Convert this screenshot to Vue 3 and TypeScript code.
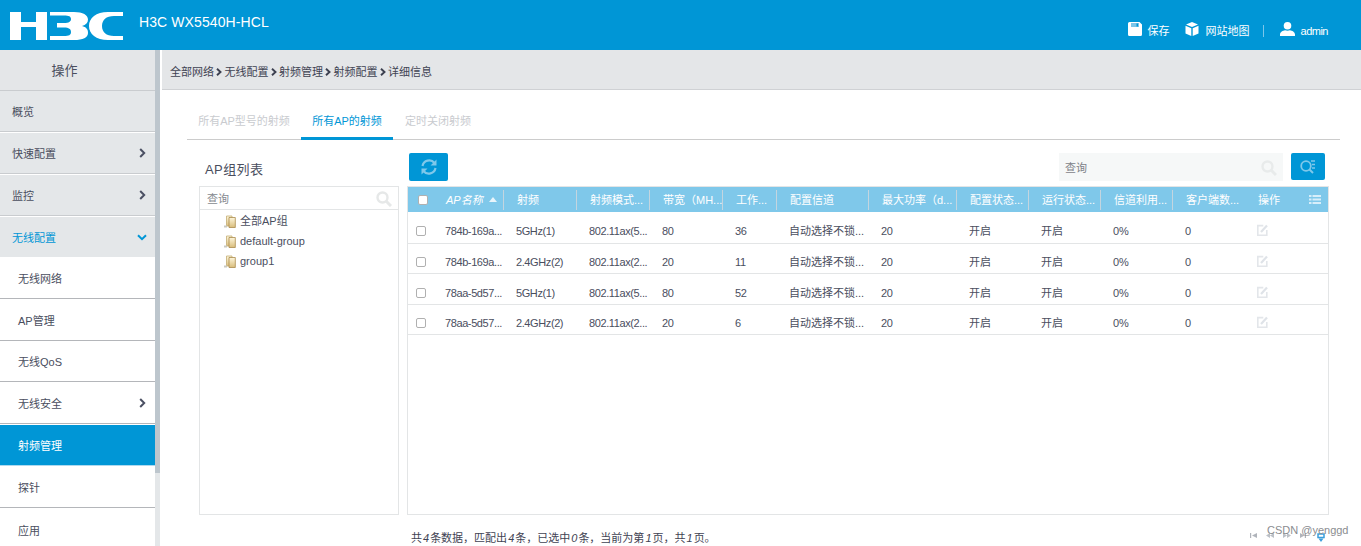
<script setup lang="ts">
const menu = [
  { t: '概览', cls: 'grey' },
  { t: '快速配置', cls: 'grey', arrow: true },
  { t: '监控', cls: 'grey', arrow: true },
  { t: '无线配置', cls: 'grey open', down: true },
  { t: '无线网络', cls: 'sub' },
  { t: 'AP管理', cls: 'sub' },
  { t: '无线QoS', cls: 'sub short' },
  { t: '无线安全', cls: 'sub', arrow: true },
  { t: '射频管理', cls: 'sub active' },
  { t: '探针', cls: 'sub' },
  { t: '应用', cls: 'sub' },
]
const heads = ['射频', '射频模式...', '带宽（MH...', '工作...', '配置信道', '最大功率（d...', '配置状态...', '运行状态...', '信道利用...', '客户端数...']
const rows = [
  ['784b-169a...', '5GHz(1)', '802.11ax(5...', '80', '36'],
  ['784b-169a...', '2.4GHz(2)', '802.11ax(2...', '20', '11'],
  ['78aa-5d57...', '5GHz(1)', '802.11ax(5...', '80', '52'],
  ['78aa-5d57...', '2.4GHz(2)', '802.11ax(2...', '20', '6'],
]
const tree = ['全部AP组', 'default-group', 'group1']
</script>

<template>
  <div class="page">
    <header class="top">
      <svg class="logo" viewBox="0 0 113 28" width="113" height="28">
        <path fill="#fff" d="M0 0h11v10h15V0h11v28H26V15H11v13H0z" />
        <path fill="#fff" d="M40 0h24c9 0 14 3 14 7.500 0 3-2 5.500-6 6.500 4 1 6 3 6 7 0 4.500-5 7-14 7H40v-4h14c5 0 7-1 7-4s-2-4.500-7-4.500H47v-4.500h7c5 0 7-1.500 7-4s-2-3.500-7-3.500H40z" />
        <path fill="#fff" d="M113 0H98C86 0 79 6 79 14s7 14 19 14h15v-4h-9c-8 0-12-4-12-10s4-10 12-10h9z" />
      </svg>
      <span class="model">H3C WX5540H-HCL</span>
      <div class="top-right">
        <span class="act save">
          <svg viewBox="0 0 14 14" width="14" height="14"><path fill="#fff" d="M1.500 0h10L14 2.500V12.500a1.500 1.500 0 0 1-1.500 1.500h-11A1.500 1.500 0 0 1 0 12.500v-11A1.500 1.500 0 0 1 1.500 0z" /><path fill="#7cc6ea" d="M3 1h8v4H3z" /><path fill="#0096d6" d="M8.500 1.500h1.500v3H8.500z" /></svg>
          保存
        </span>
        <span class="act map">
          <svg viewBox="0 0 14 14" width="14" height="14"><path fill="#fff" d="M7 0l6 2.500L7 5 1 2.500zM.5 3.800l5.800 2.400V14L.5 11.400zM13.500 3.800L7.700 6.200V14l5.800-2.600z" /></svg>
          网站地图
        </span>
        <i class="divider"></i>
        <span class="act user">
          <svg viewBox="0 0 15 14" width="15" height="14"><circle cx="7.500" cy="3.800" r="3.800" fill="#fff" /><path fill="#fff" d="M0 14v-1.500C0 10 3 8.500 5 8.200c1.500.6 3.500.6 5 0 2 .3 5 1.800 5 4.300V14z" /></svg>
          <b class="admin">admin</b>
        </span>
      </div>
    </header>

    <div class="layout">
      <aside class="side">
        <nav class="nav">
          <div class="nav-title">操作</div>
          <div v-for="m in menu" :key="m.t" class="item" :class="m.cls">
            <span>{{ m.t }}</span>
            <svg v-if="m.arrow" class="chev" viewBox="0 0 7 10" width="7" height="10"><path d="M1.200 1l4 4-4 4" fill="none" stroke="#4b5063" stroke-width="2" /></svg>
            <svg v-if="m.down" class="chev down" viewBox="0 0 10 7" width="10" height="7"><path d="M1 1.200l4 4 4-4" fill="none" stroke="#0096d6" stroke-width="2" /></svg>
          </div>
        </nav>
        <div class="track"><div class="thumb"></div></div>
      </aside>

      <main class="main">
        <div class="crumb">
          <template v-for="(c, i) in ['全部网络', '无线配置', '射频管理', '射频配置', '详细信息']" :key="c">
            <svg v-if="i" class="sep" viewBox="0 0 6 8" width="6" height="8"><path d="M1 .800L4.500 4 1 7.200" fill="none" stroke="#3c4050" stroke-width="1.900" /></svg>
            <span>{{ c }}</span>
          </template>
        </div>

        <div class="tabs">
          <div class="tab first">所有AP型号的射频</div>
          <div class="tab on">所有AP的射频</div>
          <div class="tab third">定时关闭射频</div>
        </div>

        <div class="body">
          <section class="left">
            <h3 class="left-title">AP组列表</h3>
            <div class="panel">
              <div class="panel-search">
                <span>查询</span>
                <svg class="mag" viewBox="0 0 16 16" width="16" height="16"><circle cx="6.500" cy="6.500" r="5" fill="none" stroke="#e6e8e8" stroke-width="2.400" /><path d="M10.500 10.500L15 15" stroke="#e6e8e8" stroke-width="3" /></svg>
              </div>
              <div class="tree">
                <div v-for="n in tree" :key="n" class="node">
                  <svg viewBox="0 0 12 13" width="12" height="13">
                    <defs>
                      <linearGradient id="fold" x1="0" y1="0" x2="0" y2="1">
                        <stop offset="0" stop-color="#fdf6dc" />
                        <stop offset="1" stop-color="#d9bd7c" />
                      </linearGradient>
                    </defs>
                    <path fill="url(#fold)" stroke="#c4ad74" stroke-width=".8" d="M2.500 1h5.500v10H2.500z" />
                    <path fill="url(#fold)" stroke="#ab8c4c" stroke-width=".8" d="M5 2.500h6.300v10H5z" />
                    <path fill="#c9c9c2" d="M0 10.500h3v2H0z" />
                  </svg>
                  <span>{{ n }}</span>
                </div>
              </div>
            </div>
          </section>

          <section class="right">
            <div class="toolbar">
              <button class="btn refresh">
                <svg viewBox="0 0 18 18" width="18" height="18"><path fill="none" stroke="#7fc8ea" stroke-width="2.200" d="M2.500 8a6.800 6.800 0 0 1 12-3M15.500 10a6.800 6.800 0 0 1-12 3" /><path fill="#7fc8ea" d="M16.500 1.500v6h-6zM1.500 16.500v-6h6z" /></svg>
              </button>
              <div class="search">
                <span>查询</span>
                <svg class="mag" viewBox="0 0 16 16" width="16" height="16"><circle cx="6.500" cy="6.500" r="5" fill="none" stroke="#e8ebeb" stroke-width="2.400" /><path d="M10.500 10.500L15 15" stroke="#e8ebeb" stroke-width="3" /></svg>
              </div>
              <button class="btn adv">
                <svg viewBox="0 0 16 14" width="16" height="14"><circle cx="6" cy="6" r="4.800" fill="none" stroke="#7fc8ea" stroke-width="1.800" /><path d="M9.500 9.500L13 13" stroke="#7fc8ea" stroke-width="2" /><path d="M11 1h4M12 4.500h3M12 8h3" stroke="#7fc8ea" stroke-width="1.300" /></svg>
              </button>
            </div>

            <div class="table">
              <div class="tr head">
                <div class="td chk"><i class="box"></i></div>
                <div class="td name-h"><em>AP名称</em><i class="tri"></i></div>
                <div v-for="h in heads" :key="h" class="td">{{ h }}</div>
                <div class="td plain">操作</div>
                <div class="td tail">
                  <svg viewBox="0 0 12 9" width="12" height="9"><path fill="#d7eefa" d="M0 0h2.500v2H0zM3.500 0H12v2H3.500zM0 3.500h2.500v2H0zM3.500 3.500H12v2H3.500zM0 7h2.500v2H0zM3.500 7H12v2H3.500z" /></svg>
                </div>
              </div>
              <div v-for="(r, i) in rows" :key="i" class="tr row">
                <div class="td chk"><i class="box"></i></div>
                <div v-for="(c, j) in r" :key="j" class="td latin">{{ c }}</div>
                <div class="td">自动选择不锁...</div>
                <div class="td latin">20</div>
                <div class="td">开启</div>
                <div class="td">开启</div>
                <div class="td">0%</div>
                <div class="td latin">0</div>
                <div class="td">
                  <svg class="edit" viewBox="0 0 11 12" width="11" height="12"><path fill="none" stroke="#e3e6ea" stroke-width="1.600" d="M9.800 6v5.200H.8V1.600h5.500" /><path stroke="#dfe3e8" stroke-width="2.200" d="M4 8l6-6.500" /></svg>
                </div>
                <div class="td"></div>
              </div>
            </div>

            <div class="foot">
              <span>共<em>4</em>条数据，匹配出<em>4</em>条，已选中<em>0</em>条，当前为第<em>1</em>页，共<em>1</em>页。</span>
              <div class="pager">
                <svg viewBox="0 0 7 5" width="7" height="5"><path fill="#b0b4bb" d="M0 0h1.200v5H0zM7 0v5L2 2.500z" /></svg>
                <svg viewBox="0 0 8 5" width="8" height="5"><path fill="#bcc0c6" d="M4 0v5L0 2.500zM8 0v5L4 2.500z" /></svg>
                <svg viewBox="0 0 8 5" width="8" height="5"><path fill="#bcc0c6" d="M0 0v5l4-2.500zM4 0v5l4-2.500z" /></svg>
                <svg viewBox="0 0 6 5" width="6" height="5"><path fill="#b0b4bb" d="M0 0v5l4.500-2.500zM4.800 0H6v5H4.800z" /></svg>
                <svg class="last" viewBox="0 0 8 9" width="8" height="9"><path fill="none" stroke="#3a9edc" stroke-width="1.500" d="M1 1h6v3.500H1z" /><path fill="#3a9edc" d="M1.500 5.500h5L4 9z" /></svg>
              </div>
            </div>
          </section>
        </div>
      </main>
    </div>
    <div class="mark">CSDN @yenggd</div>
  </div>
</template>

<style>
html, body { margin: 0; height: 546px; overflow: hidden; background: #fff; }
</style>

<style scoped>
.page {
  position: relative;
  width: 1361px;
  height: 546px;
  overflow: hidden;
  display: flex;
  flex-direction: column;
  font: 11px/14px "Liberation Sans", "Noto Sans CJK SC", sans-serif;
  color: #4a4e5e;
}
.top {
  flex: 0 0 50px;
  background: #0096d6;
  display: flex;
  align-items: center;
  color: #fff;
  padding-left: 10px;
}
.logo { margin-top: 1px; }
.model { margin: -6px 0 0 16px; font-size: 14px; line-height: 20px; letter-spacing: .1px; }
.top-right { margin-left: auto; margin-right: 33px; display: flex; align-items: center; padding-top: 11px; }
.act { display: flex; align-items: center; gap: 6px; }
.act svg { margin-top: -4px; }
.map { margin-left: 15px; gap: 7px; }
.divider { width: 1px; height: 12px; margin: 0 16px 0 13px; background: #7cc6ea; }
.admin { font-weight: 400; letter-spacing: -.5px; }
.layout { flex: 1; display: flex; min-height: 0; }
.side { flex: 0 0 160px; display: flex; }
.nav { width: 155px; background: #fff; }
.nav-title {
  height: 40px;
  background: #e4e6e8;
  border-bottom: 1px solid #c9cccf;
  padding-right: 26px;
  text-align: center;
  line-height: 41px;
  font-size: 13px;
}
.item {
  height: 40px;
  display: flex;
  align-items: center;
  justify-content: space-between;
  padding: 2px 9px 0 12px;
  box-sizing: content-box;
  border-bottom: 1px solid #b4b6ba;
  margin-bottom: 1px;
}
.chev { margin-top: -2px; }
.item.grey { background: #e4e7e9; border-bottom-color: #c9cccf; height: 38px; }
.item.open { color: #0096d6; margin-bottom: 0; border-bottom: 0; height: 38px; }
.item.sub { padding-left: 18px; background: #fff; margin-bottom: 0; height: 39px; }
.item.sub.short { height: 39px; padding-top: 1px; }
.item.active { background: #0096d6; color: #fff; height: 38px; padding-top: 2px; border-top: 1px solid #fff; border-bottom-color: #aed9ef; }
.item.active + .item { height: 38px; padding-top: 3px; }
.item.active + .item + .item { height: 37px; padding-top: 4px; }
.down { margin-right: -1px; }
.track { width: 5px; background: #e4e7e9; }
.thumb { height: 423px; background: #bdc6cd; }
.main { flex: 1; margin-left: 2px; min-width: 0; display: flex; flex-direction: column; }
.crumb {
  height: 39px;
  box-sizing: border-box;
  flex: none;
  background: #e4e6e8;
  border-bottom: 0;
  box-shadow: 0 1px 0 #cfd1d4;
  display: flex;
  align-items: center;
  gap: 2.25px;
  padding: 5px 0 0 8px;
  color: #3f4353;
}
.tabs {
  margin: 11px 21px 0 25px;
  height: 40px;
  flex: none;
  display: flex;
  border-bottom: 1px solid #cccccc;
  box-sizing: border-box;
  color: #c9cbcf;
}
.tab { line-height: 43px; height: 40px; box-sizing: border-box; text-align: center; }
.tab.first { width: 114px; }
.tab.on { width: 92px; color: #0096d6; border-bottom: 3px solid #0096d6; }
.tab.third { margin-left: 12px; }
.body { flex: 1; min-height: 0; display: flex; padding: 13px 0 0 37px; gap: 8px; }
.left { width: 200px; flex: none; }
.left-title { margin: 0; height: 33px; box-sizing: border-box; padding: 8px 0 0 6px; font-weight: 400; font-size: 13px; line-height: 18px; letter-spacing: .4px; }
.panel { height: 329px; box-sizing: border-box; border: 1px solid #e3e5e6; }
.panel-search {
  border-bottom: 1px solid #e3e5e6;
  display: flex;
  align-items: center;
  justify-content: space-between;
  padding: 1px 6px 0 7px;
  height: 21px;
  color: #868a90;
}
.tree { padding-top: 1px; }
.node { height: 20px; display: flex; align-items: center; gap: 4px; padding-left: 24px; color: #4a4e5e; }
.right { width: 922px; flex: none; display: flex; flex-direction: column; }
.toolbar { height: 28px; flex: none; display: flex; margin-bottom: 5px; padding-left: 2px; }
.btn { border: 0; padding: 0; margin: 0; background: #0096d6; border-radius: 2px; display: flex; align-items: center; justify-content: center; }
.refresh { width: 39px; height: 28px; }
.adv { width: 34px; height: 27px; margin-left: 8px; }
.search {
  margin-left: auto;
  width: 224px;
  height: 28px;
  background: #f6f8f8;
  display: flex;
  align-items: center;
  justify-content: space-between;
  padding: 2px 6px 0;
  box-sizing: border-box;
  color: #7e8288;
}
.toolbar .adv { margin-right: 4px; }
.table { height: 329px; flex: none; box-sizing: border-box; border: 1px solid #e3e5e6; }
.tr { display: grid; grid-template-columns: 25px 71px 73px 73px 73px 54px 92px 88px 72px 72px 72px 72px 55px 28px; align-items: center; }
.head { height: 25px; background: #7fc8ea; color: #fff; }
.head .td { height: 20px; line-height: 20px; border-right: 1px solid #c3d5df; box-sizing: border-box; padding-left: 13px; white-space: nowrap; overflow: hidden; }
.head .chk { border-right: 0; padding-left: 10px; display: flex; align-items: center; }
.head .plain, .head .td:nth-child(12), .head .tail { border-right: 0; }
.head .tail { padding: 0 0 0 9px; display: flex; align-items: center; }
.name-h { display: flex; align-items: center; gap: 6px; }
.name-h em { font-style: italic; }
.tri { width: 0; height: 0; border: 4px solid transparent; border-top: 0; border-bottom: 5px solid #e9f5fb; }
.row { height: 30px; border-bottom: 1px solid #e3e5e6; box-sizing: border-box; padding-top: 7px; }
.row:nth-child(2) { height: 32px; padding-top: 7px; }
.row:nth-child(4) { height: 31px; }
.row:nth-child(5) { padding-top: 6px; }
.row .td { padding-left: 12px; white-space: nowrap; }
.row .latin { letter-spacing: -.4px; }
.row .chk { padding-left: 8px; display: flex; }
.box { display: block; width: 8px; height: 8px; border: 1px solid #b0b0b0; border-radius: 2px; background: #fff; }
.edit { display: block; margin-top: -2px; }
.foot { display: flex; justify-content: space-between; align-items: center; height: 31px; padding: 15px 4px 0 4px; box-sizing: border-box; color: #3f4353; }
.foot em { font-style: italic; padding: 0 1px; }
.pager { display: flex; align-items: center; gap: 9px; margin-top: -5px; }
.pager .last { margin-left: 2px; margin-top: 4px; }
.mark { position: absolute; left: 1267px; top: 523px; font: 11px/14px "Liberation Sans", sans-serif; color: #8a8c90; }
</style>
